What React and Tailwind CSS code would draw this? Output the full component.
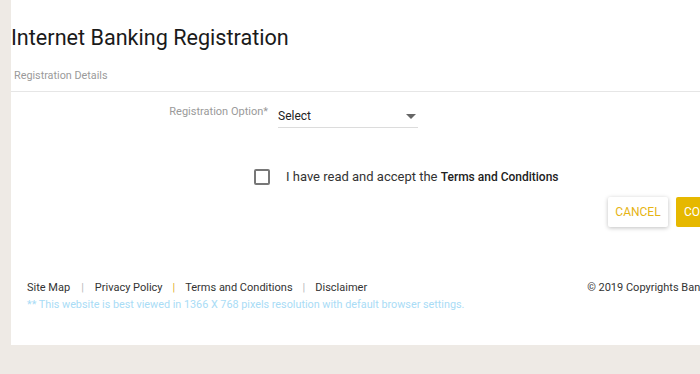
export default function App() {
  return (
    <div className="w-[700px] h-[374px] bg-[#eeeae5] overflow-hidden flex" style={{ fontFamily: "Roboto, 'Liberation Sans', sans-serif" }}>
      <div className="ml-[11px] flex-1 h-[345px] bg-white overflow-hidden">
        <div className="w-[720px]">
          <h1 className="pt-[24px] text-[21.6px] leading-[28px] text-[#1a1a1a] font-normal">Internet Banking Registration</h1>
          <div className="mt-[17px] pl-[3px] text-[10.8px] leading-[14px] text-[#9a9a9a]">Registration Details</div>
          <div className="mt-[8px] h-px bg-[#e6e6e6]" />
          <div className="flex mt-[13px]">
            <div className="w-[257px] text-right text-[11px] leading-[14px] text-[#9a9a9a]">Registration Option*</div>
            <div className="ml-[10px] w-[140px] border-b border-[#dcdcdc] flex items-center justify-between pt-[4px] pb-[3px]">
              <span className="text-[12px] leading-[15px] text-[#222]">Select</span>
              <svg width="10" height="5" viewBox="0 0 10 5" className="mr-[2px]"><path d="M0 0h10L5 5z" fill="#666" /></svg>
            </div>
          </div>
          <div className="flex items-center mt-[39px] ml-[243px]">
            <div className="w-[16px] h-[16px] border-2 border-[#777] rounded-[2px]" />
            <span className="ml-[16px] text-[13px] text-[#333]">I have read and accept the <span className="text-[12px] font-medium text-[#222]">Terms and Conditions</span></span>
          </div>
          <div className="flex mt-[10px] ml-[597px] gap-[8px]">
            <button className="shrink-0 w-[60px] h-[30px] bg-white shadow-[0_1px_4px_rgba(0,0,0,0.25)] rounded-[2px] text-[12px] font-normal text-[#e6b414]">CANCEL</button>
            <button className="shrink-0 w-[80px] h-[30px] bg-[#e6b800] rounded-[2px] text-[12px] font-normal text-white text-left pl-[8px]">CONTINUE</button>
          </div>
          <div className="flex mt-[54px] ml-[16px] text-[11px] leading-[14px] text-[#333]">
            <span>Site Map</span>
            <span className="mx-[11px] text-[#bbb]">|</span>
            <span>Privacy Policy</span>
            <span className="mx-[10px] text-[#e0b030]">|</span>
            <span>Terms and Conditions</span>
            <span className="mx-[10px] text-[#bbb]">|</span>
            <span>Disclaimer</span>
            <span className="ml-[220px] whitespace-nowrap">© 2019 Copyrights Bancs</span>
          </div>
          <div className="mt-[3px] ml-[16px] text-[10.8px] leading-[13px] text-[#a9dcf6]">** This website is best viewed in 1366 X 768 pixels resolution with default browser settings.</div>
        </div>
      </div>
    </div>
  );
}
